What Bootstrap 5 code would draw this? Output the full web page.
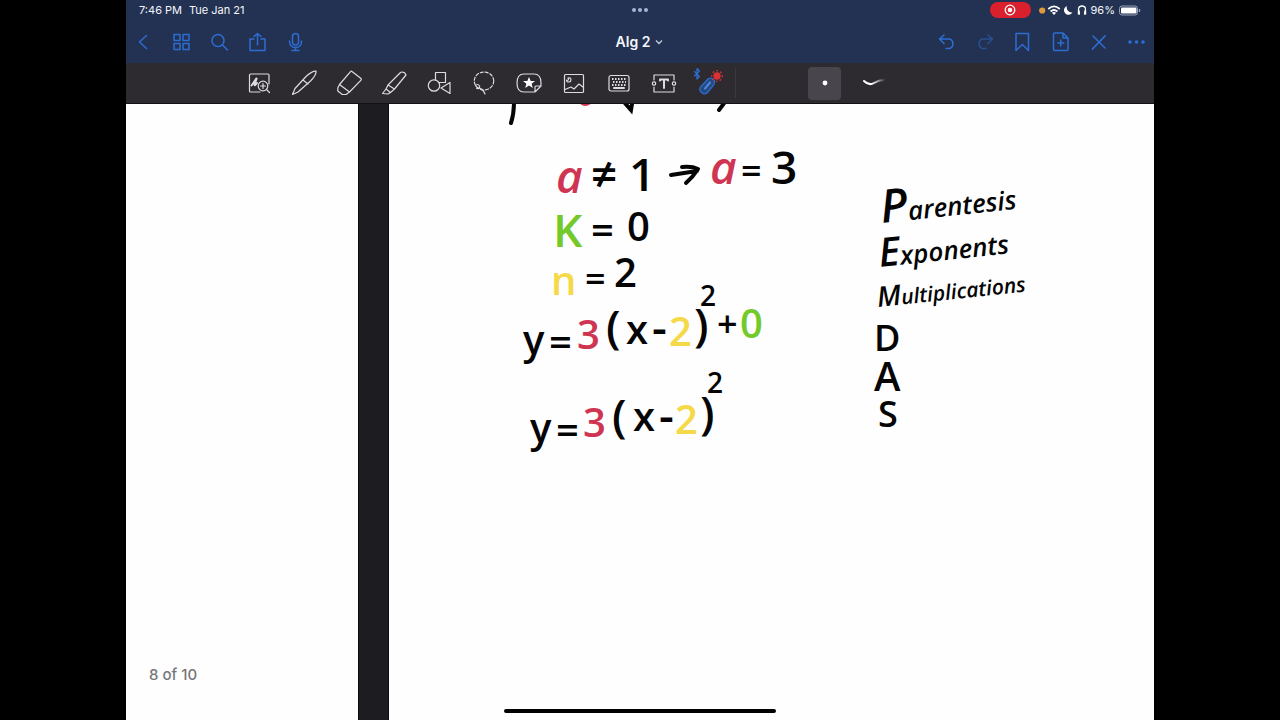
<!DOCTYPE html>
<html lang="en">
<head>
<meta charset="utf-8">
<meta name="viewport" content="width=device-width, initial-scale=1">
<title>Alg 2</title>
<link href="https://cdn.jsdelivr.net/npm/bootstrap@5.3.0/dist/css/bootstrap.min.css" rel="stylesheet">
<style>
body{background:#000;font-family:Inter,"Liberation Sans",sans-serif}
.tablet{margin:0 126px;background:#1d1c20}
.topbar{background:#233252;color:#f4f6fc;height:63px}
.status{height:20px;font-size:11px;line-height:20px;padding:0 13px}
.clock{gap:7px}
.three{display:grid;grid-template-columns:1fr auto 1fr;align-items:center}
.navrow{height:43px}
.ib{width:34px;height:34px;padding:0;border:0;background:none;color:#2d6dd2;display:flex;align-items:center;justify-content:center;border-radius:4px}
.ib svg,.tb svg{fill:none;stroke:currentColor;stroke-width:1.5;stroke-linecap:round;stroke-linejoin:round}
.ib:disabled{opacity:.5}
.doc-title{font-size:14px;font-weight:600;line-height:20px;color:#f4f6fc;border:0;background:none;padding:0}
.rec{width:41px;height:16px;border-radius:8px;background:#d9202c;border:0;padding:0}
.tools{background:#2d2b30;border-bottom:1px solid #111;height:41px;padding-left:115px}
.toolset{gap:9px}
.tb{width:36px;height:33px;padding:0;border:0;background:none;color:#dddbe0;display:flex;align-items:center;justify-content:center;flex:none}
.tb svg{stroke-width:1.2}
.pen{width:33px;border-radius:4px}
.pen.active{background:#48464c}
.rule{width:1px;height:30px;background:#3b393f;margin:0 72px 0 8px}
.paper{background:#fefefe}
.prev{width:232px;flex:none}
.gutter{width:31px;flex:none;background:#1d1c20;border-left:1px solid #0c0c0e;border-right:1px solid #0c0c0e}
.pageno{font-size:15px;line-height:20px;font-weight:500;color:#77767a;padding:0 0 35px 23px}
.ink{display:block;width:100%;font-family:"Open Sans","DejaVu Sans",sans-serif;font-weight:600;fill:#050505}
.home{width:272px;height:4px;border-radius:2px;background:#000;position:absolute;bottom:7px;left:50%;transform:translateX(-50%)}
.s1{font-size:46px}.s2{font-size:40px}.s3{font-size:36px}.s4{font-size:28px}.s5{font-size:26px}.s6{font-size:21px}
.it{font-style:italic}
.r{fill:#cf3552}.g{fill:#74c92b}.y{fill:#f5d949}
</style>
</head>
<body>
<div class="tablet min-vh-100 d-flex flex-column position-relative overflow-hidden">
<header class="topbar">
 <div class="status three">
  <div class="clock d-flex"><span>7:46 PM</span><span>Tue Jan 21</span></div>
  <svg width="20" height="6" fill="#a5b3d8"><circle cx="4" cy="3" r="2"/><circle cx="10" cy="3" r="2"/><circle cx="16" cy="3" r="2"/></svg>
  <div class="d-flex align-items-center justify-content-end">
   <button class="rec d-flex align-items-center justify-content-center" aria-label="Recording"><svg width="12" height="12"><circle cx="6" cy="6" r="4.8" fill="none" stroke="#fff" stroke-width="1.3"/><circle cx="6" cy="6" r="2.3" fill="#fff"/></svg></button>
   <svg class="ms-2" width="52" height="14" viewBox="0 0 52 14"><circle cx="3.2" cy="7.5" r="3.1" fill="#e09a3e"/><g fill="none" stroke="#fff" stroke-width="1.8"><path d="M9.3 6Q15 .8 20.7 6M11.6 8.5Q15 5.4 18.4 8.5"/></g><path d="M12.9 9.8Q15 8.2 17.1 9.8L15 12Z" fill="#fff"/><path d="M28 3A4.5 4.5 0 1 0 33.500 9.300A4.800 4.800 0 0 1 28 3Z" fill="#fff"/><path d="M40.500 11.500Q37.500 3 43 3T45.500 11.500" fill="none" stroke="#fff" stroke-width="1.300"/><path d="M39.800 7.500v4M46.200 7.500v4" stroke="#fff" stroke-width="2"/></svg>
   <span>96%</span>
   <svg class="ms-1" width="22" height="11" viewBox="0 0 22 11"><rect x=".5" y="1" width="18" height="9" rx="2.500" fill="none" stroke="#98a2b8"/><rect x="2" y="2.500" width="15.500" height="6" rx="1.300" fill="#fff"/><path d="M20.500 4v3" stroke="#98a2b8" stroke-width="1.300"/></svg>
  </div>
 </div>
 <nav class="navrow three" aria-label="Document">
  <div class="d-flex gap-1">
   <button class="ib" aria-label="Back"><svg width="20" height="20"><path d="M13.500 3.500 6.500 10l7 6.500"/></svg></button>
   <button class="ib" aria-label="Pages"><svg width="20" height="20"><path d="M3 2.500h6v6H3zM12 2.500h6v6h-6zM3 11.500h6v6H3zM12 11.500h6v6h-6z"/></svg></button>
   <button class="ib" aria-label="Search"><svg width="20" height="20"><circle cx="9" cy="8.500" r="6"/><path d="m13.500 13 5 5"/></svg></button>
   <button class="ib" aria-label="Share"><svg width="20" height="20"><path d="M7 7H3v11.500h15V7h-4M10.500 13V1.500M7 4.500l3.500-3 3.500 3"/></svg></button>
   <button class="ib" aria-label="Microphone"><svg width="20" height="20"><rect x="7.500" y="1.500" width="6" height="11.500" rx="3"/><path d="M4.500 9q0 6.500 6 6.500t6-6.500M10.500 15.500v3M7 18.500h7"/></svg></button>
  </div>
  <button class="doc-title d-flex align-items-center gap-1">Alg 2 <svg width="10" height="8" fill="none" stroke="#c3cde5" stroke-width="1.300"><path d="m2 2.500 3 3 3-3"/></svg></button>
  <div class="d-flex gap-1 justify-content-end">
   <button class="ib" aria-label="Undo"><svg width="20" height="20"><path d="M7 3 2.500 7 7 11.500M3 7h9.500a5 5 0 0 1 0 9.500H9"/></svg></button>
   <button class="ib" aria-label="Redo" disabled><svg width="20" height="20"><path d="m13 3 4.500 4-4.500 4.500M17 7H7.500a5 5 0 0 0 0 9.500H11"/></svg></button>
   <button class="ib" aria-label="Bookmark"><svg width="20" height="20"><path d="M3 1.500h12.500v17l-6.200-6L3 18.500z"/></svg></button>
   <button class="ib" aria-label="Add page"><svg width="20" height="20"><path d="M3.500 1H12l5 5v11.500q0 1-1 1H3.500q-1 0-1-1V2q0-1 1-1ZM12 1v5h5M9.800 8v6M6.800 11h6"/></svg></button>
   <button class="ib" aria-label="Read only"><svg width="20" height="20"><path d="m4 4 12 12"/><path d="M16 4 3.500 17" stroke-width="1.800"/></svg></button>
   <button class="ib" aria-label="More"><svg width="20" height="20"><g fill="currentColor" stroke="none"><circle cx="3" cy="10" r="1.800"/><circle cx="9.500" cy="10" r="1.800"/><circle cx="16" cy="10" r="1.800"/></g></svg></button>
  </div>
 </nav>
</header>
<div class="tools d-flex align-items-center" role="toolbar" aria-label="Tools">
 <div class="toolset d-flex">
  <button class="tb" aria-label="Zoom window"><svg width="26" height="26"><path d="M14 22H4.500q-1 0-1-1V5q0-1 1-1h17.500q1 0 1 1v9"/><path d="M5.500 15.500C8 12 11 7 10.500 9L8.500 14.500q0 2 2.500-1.500" stroke-width="2"/><circle cx="17" cy="16" r="4.800"/><path d="m20.500 19.500 3 3M14.500 16h5M17 13.500v5"/></svg></button>
  <button class="tb" aria-label="Pen"><svg width="26" height="26"><path d="M1.500 24.500 4 18.500 15.500 6Q22 .5 25 1.200 25.500 5 19.500 11L7 22zM12 10l5 4"/></svg></button>
  <button class="tb" aria-label="Eraser"><svg width="28" height="28"><path d="m17 2.500 9 7q.8.800 0 1.600L14.500 23 4.500 15.500 15.500 2.700q.8-.8 1.500-.2ZM4.500 15.500 2.800 19v3l4.500 3.500H11l3.500-2.500"/></svg></button>
  <button class="tb" aria-label="Highlighter"><svg width="26" height="26"><path d="M21 2q3 0 4 3L13.500 19l-6.500-4L19.500 2.500Q20 2 21 2ZM7 15l-2 4 4.500 3.500 4-3.500M5 19l-3.500 4.500 5.500.5 2.500-1.500"/></svg></button>
  <button class="tb" aria-label="Shapes"><svg width="26" height="26"><path d="M9.500 10V2.500h10v10H13"/><circle cx="8" cy="15.500" r="5.700"/><path d="m15 18 9-5.500v11Z"/></svg></button>
  <button class="tb" aria-label="Lasso"><svg width="26" height="26"><ellipse cx="13" cy="11" rx="9.700" ry="9" stroke-dasharray="3 2"/><path d="M4.500 16q2-3 4 0c1 3-3 3-3 2q6-.5 8.500 6"/></svg></button>
  <button class="tb" aria-label="Stickers"><svg width="28" height="26"><path d="M20 22H9Q2 22 2 13T9 4h10q7 0 7 9v3zM20 22v-5q0-1 1-1h5"/><path d="m14 7 1.700 4h4.300l-3.400 2.700 1.200 4.300-3.800-2.500L10.200 18l1.200-4.300L8 11h4.300z" fill="#fff" stroke="none"/></svg></button>
  <button class="tb" aria-label="Image"><svg width="26" height="26"><rect x="3.500" y="4.500" width="19" height="18" rx="1"/><path d="M4 19.500 10 17l3 2 5-5 4 3M7 8q4-1 2.500 3.500Q5.500 13 5.500 10q3 1 1.500-2"/></svg></button>
  <button class="tb" aria-label="Keyboard"><svg width="26" height="26"><rect x="3" y="5.500" width="20" height="15.500" rx="2"/><path d="M6 9h15M7 12h13M6 15h15" stroke-width="2" stroke-dasharray="1.500 1.500" stroke-linecap="butt"/><path d="M8 18h10" stroke-width="2"/></svg></button>
  <button class="tb" aria-label="Text box"><svg width="28" height="26"><path d="M4 10V5h20v5M4 17v5h20v-5"/><circle cx="4" cy="13.500" r="1.700"/><circle cx="24" cy="13.500" r="1.700"/><path d="M10 10.500V9.500h8v1M14 9.500v8.500" stroke-width="2"/></svg></button>
  <button class="tb" aria-label="Laser pointer"><svg width="36" height="32"><path d="m3.500 4.500 5 5-2.500 2.500V1.500L8.500 4l-5 5" stroke="#2d6dd2"/><path d="m9.500 20 7.500-8q2.500-2 5 0t1 5.500L16 26q-2.500 2-5.500-.5T9.500 20Z" fill="#254a80" stroke="#2d6dd2"/><path d="m14 21.500 5-6" stroke="#4d87df" stroke-width="2"/><circle cx="26" cy="9" r="3.700" fill="#dc3037" stroke="none"/><circle cx="26" cy="9" r="5.300" stroke="#dc3037" stroke-dasharray="1 3"/></svg></button>
 </div>
 <div class="rule"></div>
 <div class="d-flex gap-3">
  <button class="tb pen active" aria-label="Dot"><svg width="8" height="8"><circle cx="4" cy="4" r="2.400" fill="#fff" stroke="none"/></svg></button>
  <button class="tb pen" aria-label="Stroke"><svg width="26" height="12"><defs><linearGradient id="fade"><stop offset=".4" stop-color="#fff"/><stop offset="1" stop-color="#fff" stop-opacity=".1"/></linearGradient></defs><path d="M3 4q5 5 10 2t10-3" stroke="url(#fade)" stroke-width="2"/></svg></button>
 </div>
</div>
<main class="d-flex flex-grow-1">
 <section class="paper prev d-flex align-items-end" aria-label="Previous page"><div class="pageno">8 of 10</div></section>
 <div class="gutter"></div>
 <section class="paper flex-grow-1" aria-label="Current page">
  <svg class="ink" viewBox="389 104 765 596">
   <!-- tail ends of the line scrolled under the toolbar -->
   <g fill="none" stroke="#050505" stroke-width="4" stroke-linecap="round"><path d="M514 102q0 12-3 21M624 102l7 8 1-6M725 102l-6 8"/><path d="M581 102q4 4 9 0" stroke="#cf3552"/></g>
   <!-- arrow between the two conditions -->
   <path d="M671 175l26-4M682 167q10-1 16 2-5 8-12 14" fill="none" stroke="#050505" stroke-width="4" stroke-linecap="round" stroke-linejoin="round"/>
   <g class="s1">
    <text class="r it" x="556" y="193">a</text><text x="591" y="191">≠</text><text x="629" y="191">1</text><text class="r it" x="710" y="184">a</text><text class="s3" x="741" y="184">=</text><text x="771" y="184">3</text>
    <text class="g" x="553" y="247">K</text><text class="s2" x="591" y="244">=</text><text class="s2" x="627" y="241">0</text>
    <text class="y s2" x="551" y="295">n</text><text class="s3" x="585" y="292">=</text><text class="s2" x="614" y="287">2</text>
   </g>
   <g class="s2">
    <text x="523" y="354">y</text><text x="549" y="356">=</text><text class="r" x="577" y="349">3</text><text class="s1" x="606" y="343">(</text><text x="626" y="344">x</text><text class="s1" x="652" y="344">-</text><text class="y" x="669" y="346">2</text><text class="s1" x="694" y="341">)</text><text class="s4" x="700" y="306">2</text><text class="s3" x="717" y="337">+</text><text class="g" x="740" y="338">0</text>
    <text x="530" y="442">y</text><text x="556" y="444">=</text><text class="r" x="583" y="437">3</text><text class="s1" x="612" y="432">(</text><text x="633" y="431">x</text><text class="s1" x="659" y="432">-</text><text class="y" x="675" y="434">2</text><text class="s1" x="700" y="429">)</text><text class="s4" x="707" y="393">2</text>
   </g>
   <g class="it">
    <text class="s5" x="882" y="223" transform="rotate(-6 882 223)"><tspan class="s1">P</tspan>arentesis</text>
    <text class="s5" x="880" y="267" transform="rotate(-6 880 267)"><tspan class="s2">E</tspan>xponents</text>
    <text class="s6" x="878" y="307" transform="rotate(-6 878 307)"><tspan class="s4">M</tspan>ultiplications</text>
   </g>
   <text class="s3" x="874" y="351">D</text><text class="s2" x="874" y="391">A</text><text class="s3" x="878" y="427">S</text>
  </svg>
 </section>
</main>
<div class="home"></div>
</div>
<script src="https://cdn.jsdelivr.net/npm/bootstrap@5.3.0/dist/js/bootstrap.bundle.min.js"></script>
</body>
</html>
